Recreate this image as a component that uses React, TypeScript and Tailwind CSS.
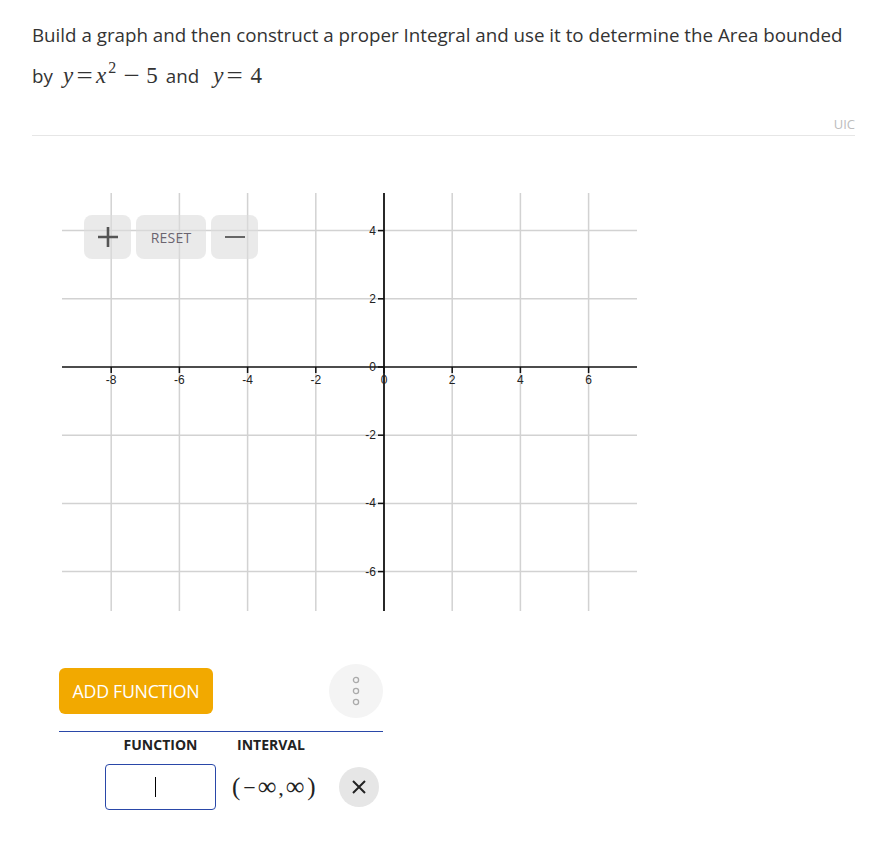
import React from 'react';

const UNIT = 34.1;
const OX = 322;
const OY = 174;
const W = 575;
const H = 418;

const Graph = () => {
  const xs = [-8, -6, -4, -2, 2, 4, 6];
  const ys = [-6, -4, -2, 2, 4];
  return (
    <div className="relative w-[575px] h-[418px]">
      <svg width={W} height={H} className="absolute inset-0" style={{ fontFamily: '"Liberation Sans", Arial, sans-serif' }}>
        {xs.map((v) => (
          <line key={'gx' + v} x1={OX + v * UNIT} x2={OX + v * UNIT} y1={0} y2={H} stroke="#d2d2d2" strokeWidth={1.5} />
        ))}
        {ys.map((v) => (
          <line key={'gy' + v} x1={0} x2={W} y1={OY - v * UNIT} y2={OY - v * UNIT} stroke="#d2d2d2" strokeWidth={1.5} />
        ))}
        {/* axes */}
        <line x1={0} x2={W} y1={OY} y2={OY} stroke="#111" strokeWidth={1.6} />
        <line x1={OX} x2={OX} y1={0} y2={H} stroke="#111" strokeWidth={1.8} />
        {[...xs, 0].map((v) => (
          <g key={'tx' + v}>
            <line x1={OX + v * UNIT} x2={OX + v * UNIT} y1={OY} y2={OY + 6} stroke="#111" strokeWidth={1.5} />
            <text x={OX + v * UNIT} y={OY + 17} fontSize={12} fill="#222" textAnchor="middle">{v}</text>
          </g>
        ))}
        {[...ys, 0].map((v) => (
          <g key={'ty' + v}>
            <line x1={OX - 6} x2={OX} y1={OY - v * UNIT} y2={OY - v * UNIT} stroke="#111" strokeWidth={1.5} />
            <text x={OX - 8} y={OY - v * UNIT + 4} fontSize={12} fill="#222" textAnchor="end">{v}</text>
          </g>
        ))}
      </svg>

      {/* zoom controls */}
      <div className="absolute left-[22px] top-[22px] flex gap-[5px]">
        <button className="w-[47px] h-[44px] rounded-lg bg-[#dcdcdc]/60 flex items-center justify-center">
          <svg width="22" height="22" viewBox="0 0 22 22">
            <path d="M11 1v20M1 11h20" stroke="#555" strokeWidth="2.6" />
          </svg>
        </button>
        <button className="w-[70px] h-[44px] rounded-lg bg-[#dcdcdc]/60 text-[14px] text-[#6a6470] tracking-[0.2px]">
          RESET
        </button>
        <button className="w-[47px] h-[44px] rounded-lg bg-[#dcdcdc]/60 flex items-center justify-center">
          <svg width="22" height="22" viewBox="0 0 22 22">
            <path d="M1 11h20" stroke="#666" strokeWidth="2" />
          </svg>
        </button>
      </div>
    </div>
  );
};

const mathFont = { fontFamily: '"Liberation Serif", "DejaVu Serif", serif' };

export default function App() {
  return (
    <div className="min-h-screen bg-white text-[#333] pl-[32px] pr-[14px] pt-[14px]" style={{ fontFamily: '"Open Sans", sans-serif' }}>
      <div className="text-[18.75px] leading-[41px]">
        <div>Build a graph and then construct a proper Integral and use it to determine the Area bounded</div>
        <div>
          by
          <span className="text-[23px] ml-[10px] mr-[8px]" style={mathFont}>
            <i>y</i>
            <span className="mx-[5px] inline-block scale-x-125">=</span>
            <i>x</i>
            <sup className="text-[16px] -top-[0.6em] ml-[2px]">2</sup>
            <span className="ml-[9px] mr-[8px] inline-block scale-x-125">−</span>
            <span>5</span>
          </span>
          and
          <span className="text-[23px] ml-[14px]" style={mathFont}>
            <i>y</i>
            <span className="mx-[5px] inline-block scale-x-125">=</span>
            <span className="ml-[4px]">4</span>
          </span>
        </div>
      </div>

      <div className="mt-[19px] border-b border-[#e6e6e6] text-right text-[13px] leading-[18px] pb-[2px] text-[#bdbdbd]">
        UIC
      </div>

      <div className="ml-[30px] mt-[57px]">
        <Graph />
      </div>

      <div className="ml-[27px] mt-[53px] w-[324px]">
        <div className="flex items-center justify-between">
          <button className="w-[154px] h-[46px] rounded-md bg-[#f2a900] text-white text-[17.8px] tracking-[-0.3px]">
            ADD FUNCTION
          </button>
          <button className="w-[54px] h-[54px] rounded-full bg-[#f4f4f4] flex items-center justify-center">
            <svg width="10" height="30" viewBox="0 0 10 30">
              <circle cx="5" cy="4" r="2.6" fill="none" stroke="#aaa" strokeWidth="1.3" />
              <circle cx="5" cy="15" r="2.6" fill="none" stroke="#aaa" strokeWidth="1.3" />
              <circle cx="5" cy="26" r="2.6" fill="none" stroke="#aaa" strokeWidth="1.3" />
            </svg>
          </button>
        </div>
        <div className="mt-[13px] border-t-[1.5px] border-[#2a48a8]" />
        <div className="flex pl-[46px] mt-[3px] text-[14px] font-bold text-[#222] leading-[20px]">
          <div className="w-[111px] text-center">FUNCTION</div>
          <div className="w-[122px] text-center pr-[12px]">INTERVAL</div>
        </div>
        <div className="flex items-center pl-[46px] mt-[9px]">
          <div className="w-[111px] h-[46px] rounded-[4px] border border-[#2a48a8] flex items-center justify-center">
            <div className="w-[1.5px] h-[20px] bg-black mr-[10px]" />
          </div>
          <div className="ml-[16px] w-[88px] text-[22px] text-[#222] flex items-center" style={mathFont}>
            <span className="text-[25px]">(</span>
            <span className="ml-[3px] mr-[2px]">−</span>
            <span className="text-[26px] leading-none">∞</span>
            <span className="mx-[2px]">,</span>
            <span className="text-[26px] leading-none">∞</span>
            <span className="text-[25px] ml-[3px]">)</span>
          </div>
          <button className="ml-[19px] w-[40px] h-[40px] rounded-full bg-[#e6e6e6] flex items-center justify-center">
            <svg width="16" height="16" viewBox="0 0 16 16">
              <path d="M2 2l12 12M14 2L2 14" stroke="#222" strokeWidth="2" />
            </svg>
          </button>
        </div>
      </div>
    </div>
  );
}
